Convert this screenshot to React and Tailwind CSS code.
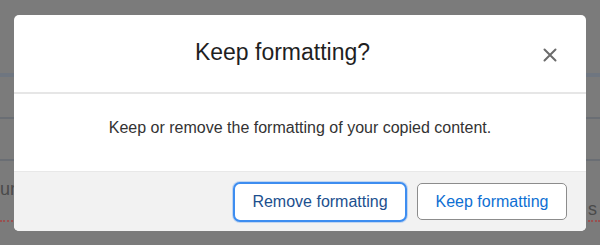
import React from "react";

export default function App() {
  return (
    <div className="relative w-[600px] h-[245px] overflow-hidden bg-[#7b7b7b]" style={{ fontFamily: '"Liberation Sans", Arial, sans-serif' }}>
      {/* background page content (dimmed) */}
      <div className="flex flex-col pt-[73px]">
        <div className="h-[4px] bg-[#6f7680]" />
        <div className="h-[2px] bg-[#6a6e74] mt-[40px]" />
        <div className="h-[2px] bg-[#6a6e74] mt-[40px]" />
        <div className="flex justify-between mt-[19px] text-[18px] text-[#4a4a4a] leading-none">
          <span className="border-b-2 border-dotted border-[#9a5050] pb-[2px]">ur</span>
          <span className="border-b-2 border-dotted border-[#9a5050] pb-[2px] mt-[20px] w-[12px] overflow-hidden">s</span>
        </div>
      </div>

      {/* modal dialog overlay */}
      <div className="absolute left-[14px] top-[15px] w-[572px] h-[216px] bg-white rounded-[5px] overflow-hidden flex flex-col">
        <div className="h-[77px] shrink-0 flex items-center justify-between border-b-2 border-[#e6e6e6] box-content pl-[38px] pr-[29px]">
          <span className="flex-1 text-center text-[23px] text-[#1f1f1f] mb-[3px]">Keep formatting?</span>
          <button className="w-[14px] h-[14px] flex items-center justify-center ml-[30px] mt-[3px]">
            <svg width="14" height="14" viewBox="0 0 14 14">
              <path d="M1.5 1.5 L12.5 12.5 M12.5 1.5 L1.5 12.5" stroke="#6b6b6b" strokeWidth="2" strokeLinecap="round" />
            </svg>
          </button>
        </div>
        <div className="h-[77px] shrink-0 flex items-center justify-center pb-[10px]">
          <span className="text-[16px] text-[#333333]">Keep or remove the formatting of your copied content.</span>
        </div>
        <div className="flex-1 bg-[#f2f2f2] border-t border-[#e8e8e8] flex items-center justify-end pr-[19px] gap-[10px]">
          <button className="w-[174px] h-[40px] rounded-[7px] bg-white border-2 border-[#3d8df0] shadow-[0_0_0_1px_rgba(100,160,240,0.35)] text-[16px] text-[#1c4f8e]">
            Remove formatting
          </button>
          <button className="w-[150px] h-[37px] rounded-[5px] bg-white border border-[#8c8c8c] text-[16px] text-[#0e6fd3]">
            Keep formatting
          </button>
        </div>
      </div>
    </div>
  );
}
